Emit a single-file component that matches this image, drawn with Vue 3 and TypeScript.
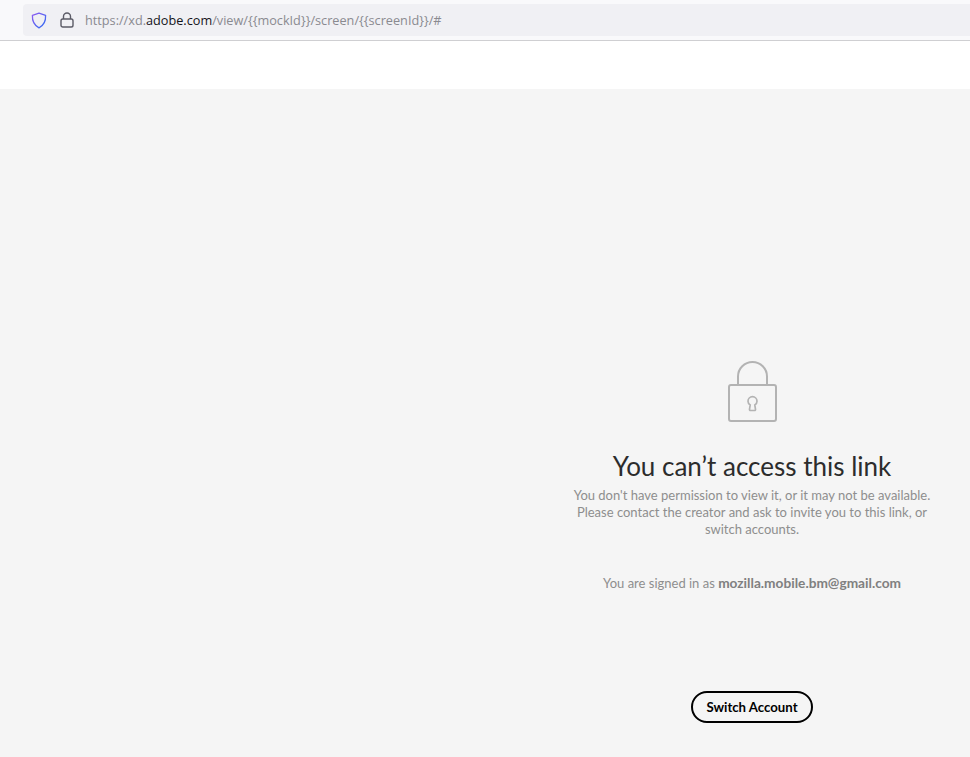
<script setup lang="ts">
const email = 'mozilla.mobile.bm@gmail.com'
</script>

<template>
  <div class="page">
    <header class="browser-bar">
      <div class="url-box">
        <svg class="shield" width="16" height="17" viewBox="0 0 16 17" fill="none">
          <defs>
            <linearGradient id="shieldGrad" x1="0" y1="0" x2="1" y2="1">
              <stop offset="0" stop-color="#8f5cf0" />
              <stop offset="1" stop-color="#2f6df2" />
            </linearGradient>
          </defs>
          <path d="M8 1.2 14.6 3.3c.3 5.8-1.6 10-6.6 12.5C3 13.3 1.1 9.1 1.4 3.3Z" stroke="url(#shieldGrad)" stroke-width="1.3" stroke-linejoin="round" />
        </svg>
        <svg class="padlock" width="14" height="16" viewBox="0 0 14 16" fill="none">
          <path d="M3.5 7V4.5a3.5 3.5 0 0 1 7 0V7" stroke="#5b5b66" stroke-width="1.4" />
          <rect x="1" y="7" width="12" height="8" rx="1.8" stroke="#5b5b66" stroke-width="1.4" />
        </svg>
        <span class="url">https://xd.<b>adobe.com</b>/view/&#123;&#123;mockId&#125;&#125;/screen/&#123;&#123;screenId&#125;&#125;/#</span>
      </div>
    </header>
    <div class="white-strip"></div>
    <main class="content">
      <div class="left-pane"></div>
      <section class="message">
        <svg class="big-lock" width="50" height="61" viewBox="0 0 50 61" fill="none">
          <path d="M11 24V15.5C11 7.5 17.5 1 25.5 1S40 7.5 40 15.5V24" stroke="#b3b3b3" stroke-width="2" />
          <rect x="2" y="24" width="47" height="36" rx="2" stroke="#b3b3b3" stroke-width="2" />
          <path d="M23 49.5h4.5c.7 0 1.1-.5 1-1.1l-.7-4.4c1.3-.8 2.2-2.2 2.2-3.8 0-2.5-2-4.5-4.5-4.5s-4.5 2-4.500 4.500c0 1.600.9 3 2.200 3.800l-.7 4.400c-.1.600.3 1.100 1 1.100Z" stroke="#b3b3b3" stroke-width="1.7" />
        </svg>
        <h1>You can’t access this link</h1>
        <p class="desc">You don't have permission to view it, or it may not be available. Please contact the creator and ask to invite you to this link, or switch accounts.</p>
        <p class="signed">You are signed in as <b>{{ email }}</b></p>
        <button class="switch-btn">Switch Account</button>
      </section>
    </main>
  </div>
</template>

<style scoped>
.page {
  height: 757px;
  display: flex;
  flex-direction: column;
  background: #fff;
  font-family: Lato, "Open Sans", sans-serif;
}

.browser-bar {
  height: 41px;
  flex: none;
  box-sizing: border-box;
  padding: 4px 0 4px 23px;
  background: #f9f9fb;
  border-bottom: 1px solid #cfcfd2;
}

.url-box {
  height: 32px;
  display: flex;
  align-items: center;
  padding-left: 8px;
  background: #f0f0f4;
  border-radius: 4px 0 0 4px;
}

.shield {
  flex: none;
}

.padlock {
  flex: none;
  margin-left: 13px;
}

.url {
  margin-left: 11px;
  font-family: "Open Sans", sans-serif;
  font-size: 12.7px;
  color: #8a8a90;
  white-space: nowrap;
}

.url b {
  font-weight: 400;
  color: #15141a;
}

.white-strip {
  height: 48px;
  flex: none;
}

.content {
  flex: 1;
  display: grid;
  grid-template-columns: 534px 436px;
  background: #f5f5f5;
}

.message {
  display: flex;
  flex-direction: column;
  align-items: center;
  padding-top: 272px;
  text-align: center;
}

.big-lock {
  flex: none;
}

h1 {
  margin: 27px 0 0;
  font-size: 26px;
  line-height: 34px;
  font-weight: 400;
  color: #2c2c2c;
}

.desc {
  width: 364px;
  margin: 4px 0 0;
  font-size: 13px;
  line-height: 17px;
  color: #8e8e8e;
}

.signed {
  margin: 36px 0 0;
  font-size: 13px;
  line-height: 17px;
  color: #8e8e8e;
}

.signed b {
  font-size: 13.7px;
  font-weight: 700;
  color: #808080;
}

.switch-btn {
  width: 122px;
  height: 32px;
  margin-top: 99px;
  padding: 0;
  box-sizing: border-box;
  border: 2px solid #000;
  border-radius: 16px;
  background: transparent;
  color: #000;
  font-family: inherit;
  font-size: 13.2px;
  font-weight: 700;
}
</style>
